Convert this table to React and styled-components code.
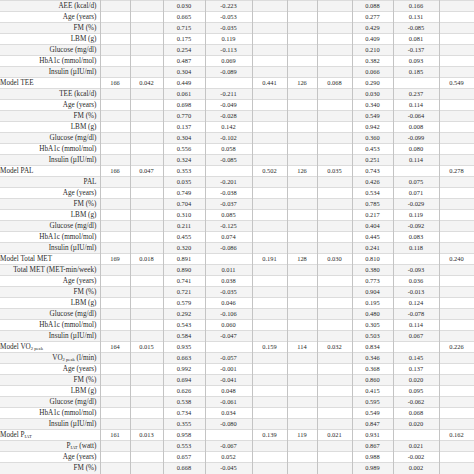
import React from 'react'
import styled, { createGlobalStyle } from 'styled-components'

const Global = createGlobalStyle`
  html, body {
    margin: 0;
    padding: 0;
    background: #fff;
  }
  body {
    width: 474px;
    height: 474px;
    overflow: hidden;
  }
`

const Table = styled.table`
  width: 474px;
  table-layout: fixed;
  border-collapse: collapse;
  font-family: "Liberation Serif", "DejaVu Serif", serif;
  color: #2a2a2a;
`

const Row = styled.tr`
  height: 11px;
  background: ${props => (props.$shade ? '#f4f4f4' : '#ffffff')};
`

const Cell = styled.td`
  height: 10px;
  max-height: 10px;
  padding: 0;
  font-size: 6.4px;
  line-height: 10px;
  text-align: center;
  white-space: nowrap;
  overflow: visible;
  border-top: 1px solid #dcdcdc;
  border-left: 1px solid #c4c4c4;
  border-right: 1px solid #c4c4c4;
`

const Label = styled(Cell)`
  font-size: 7.2px;
  text-align: ${props => (props.$model ? 'left' : 'right')};
  padding: ${props => (props.$model ? '0' : '0 3px 0 7px')};
  border-left: none;
`

const Sub = styled.sub`
  font-size: 4.6px;
  vertical-align: -1px;
  line-height: 0;
`

const widths = [100, 30, 33, 42, 47, 35, 30, 35, 41, 46, 35]

const sub = (base, s, rest = '') => (
  <>
    {base}
    <Sub>{s}</Sub>
    {rest}
  </>
)

const vars = ['Age (years)', 'FM (%)', 'LBM (g)', 'Glucose (mg/dl)', 'HbA1c (mmol/mol)', 'Insulin (µIU/ml)']

const item = (label, a, b, c, d) => ({ label, cells: [a, b, c, d] })

const rows = [
  item('AEE (kcal/d)', '0.030', '-0.223', '0.088', '0.166'),
  item(vars[0], '0.665', '-0.053', '0.277', '0.131'),
  item(vars[1], '0.715', '-0.035', '0.429', '-0.085'),
  item(vars[2], '0.175', '0.119', '0.409', '0.081'),
  item(vars[3], '0.254', '-0.113', '0.210', '-0.137'),
  item(vars[4], '0.487', '0.069', '0.382', '0.093'),
  item(vars[5], '0.304', '-0.089', '0.066', '0.185'),
  { label: 'Model TEE', model: true, stats: ['166', '0.042', '0.449', '0.441', '126', '0.068', '0.290', '0.549'] },
  item('TEE (kcal/d)', '0.061', '-0.211', '0.030', '0.237'),
  item(vars[0], '0.698', '-0.049', '0.340', '0.114'),
  item(vars[1], '0.770', '-0.028', '0.549', '-0.064'),
  item(vars[2], '0.137', '0.142', '0.942', '0.008'),
  item(vars[3], '0.304', '-0.102', '0.360', '-0.099'),
  item(vars[4], '0.556', '0.058', '0.453', '0.080'),
  item(vars[5], '0.324', '-0.085', '0.251', '0.114'),
  { label: 'Model PAL', model: true, stats: ['166', '0.047', '0.353', '0.502', '126', '0.035', '0.743', '0.278'] },
  item('PAL', '0.035', '-0.201', '0.426', '0.075'),
  item(vars[0], '0.749', '-0.038', '0.534', '0.071'),
  item(vars[1], '0.704', '-0.037', '0.785', '-0.029'),
  item(vars[2], '0.310', '0.085', '0.217', '0.119'),
  item(vars[3], '0.211', '-0.125', '0.404', '-0.092'),
  item(vars[4], '0.455', '0.074', '0.445', '0.083'),
  item(vars[5], '0.320', '-0.086', '0.241', '0.118'),
  { label: 'Model Total MET', model: true, stats: ['169', '0.018', '0.891', '0.191', '128', '0.030', '0.810', '0.240'] },
  item('Total MET (MET-min/week)', '0.890', '0.011', '0.380', '-0.093'),
  item(vars[0], '0.741', '0.038', '0.773', '0.036'),
  item(vars[1], '0.721', '-0.035', '0.904', '-0.013'),
  item(vars[2], '0.579', '0.046', '0.195', '0.124'),
  item(vars[3], '0.292', '-0.106', '0.480', '-0.078'),
  item(vars[4], '0.543', '0.060', '0.305', '0.114'),
  item(vars[5], '0.584', '-0.047', '0.503', '0.067'),
  { label: sub('Model VO', '2 peak'), model: true, stats: ['164', '0.015', '0.935', '0.159', '114', '0.032', '0.834', '0.226'] },
  item(sub('VO', '2 peak', ' (l/min)'), '0.663', '-0.057', '0.346', '0.145'),
  item(vars[0], '0.992', '-0.001', '0.368', '0.137'),
  item(vars[1], '0.694', '-0.041', '0.860', '0.020'),
  item(vars[2], '0.626', '0.048', '0.415', '0.095'),
  item(vars[3], '0.538', '-0.061', '0.595', '-0.062'),
  item(vars[4], '0.734', '0.034', '0.549', '0.068'),
  item(vars[5], '0.355', '-0.080', '0.847', '0.020'),
  { label: sub('Model P', 'IAT'), model: true, stats: ['161', '0.013', '0.958', '0.139', '119', '0.021', '0.931', '0.162'] },
  item(sub('P', 'IAT', ' (watt)'), '0.553', '-0.067', '0.867', '0.021'),
  item(vars[0], '0.657', '0.052', '0.988', '-0.002'),
  item(vars[1], '0.668', '-0.045', '0.989', '0.002')
]

const toCells = r => {
  if (r.model) {
    const s = r.stats
    return [s[0], s[1], s[2], '', s[3], s[4], s[5], s[6], '', s[7]]
  }
  const [a, b, c, d] = r.cells
  return ['', '', a, b, '', '', '', c, d, '']
}

const App = () => (
  <>
    <Global />
    <Table>
      <colgroup>
        {widths.map((w, i) => (
          <col key={i} style={{ width: w }} />
        ))}
      </colgroup>
      <tbody>
        {rows.map((r, i) => (
          <Row key={i} $shade={i % 2 === 0}>
            <Label $model={r.model}>{r.label}</Label>
            {toCells(r).map((c, j) => (
              <Cell key={j}>{c}</Cell>
            ))}
          </Row>
        ))}
      </tbody>
    </Table>
  </>
)

export default App
